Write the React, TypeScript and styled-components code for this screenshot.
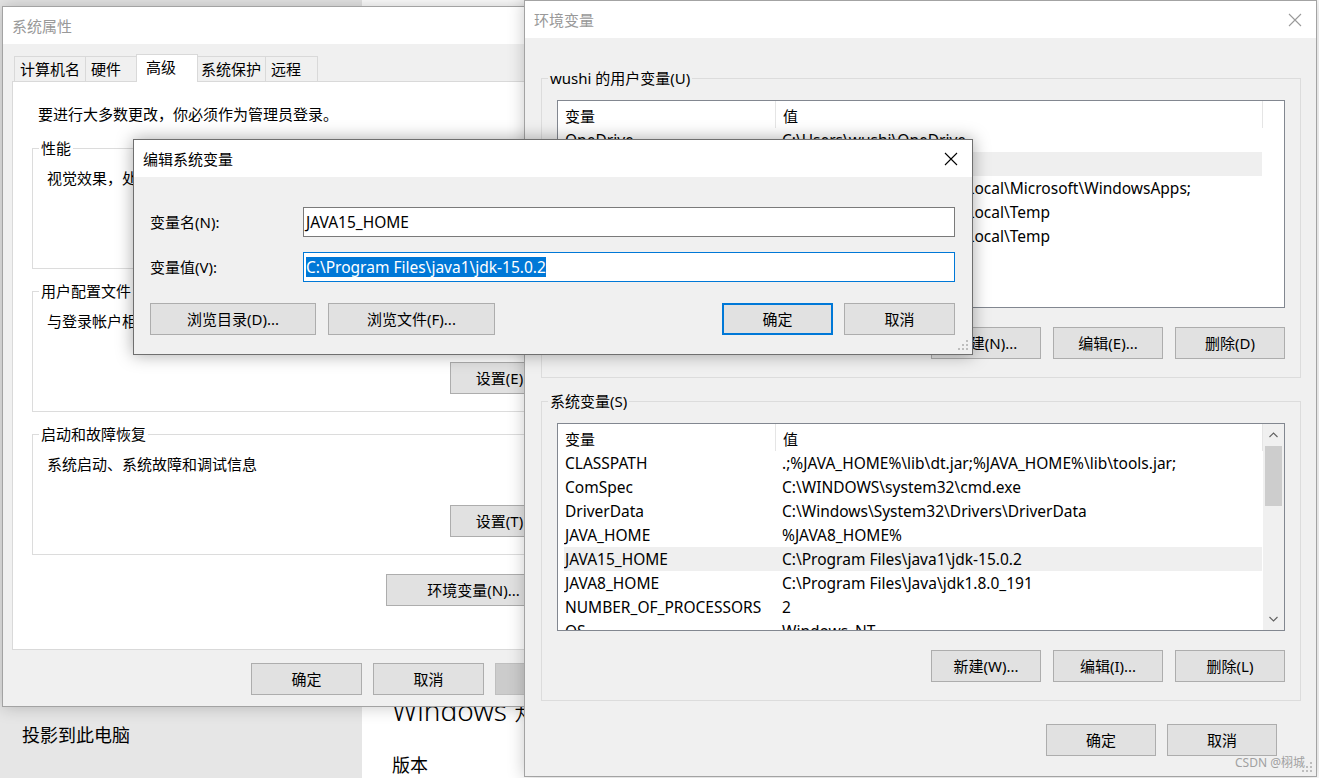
import React from "react";
import styled, { createGlobalStyle, css } from "styled-components";

const GlobalStyle = createGlobalStyle`
  html, body {
    margin: 0;
    padding: 0;
  }
  body {
    font-family: "Noto Sans", "Noto Sans CJK SC", sans-serif;
    font-size: 15px;
    color: #000;
  }
  * {
    box-sizing: border-box;
  }
`;

const Desktop = styled.div`
  position: relative;
  width: 1319px;
  height: 778px;
  overflow: hidden;
  display: flex;
`;

/* settings app behind the dialogs */
const NavPane = styled.aside`
  width: 362px;
  background: #e6e6e6;
  display: flex;
  flex-direction: column;
  justify-content: flex-end;
  padding: 0 0 31px 22px;
`;

const NavItem = styled.div`
  font-size: 18px;
  line-height: 24px;
`;

const ContentPane = styled.main`
  flex: 1;
  background: #fff;
  display: flex;
  flex-direction: column;
  justify-content: flex-end;
  padding: 0 0 1px 30px;
`;

const Heading = styled.h2`
  margin: 0;
  font-size: 28px;
  font-weight: 300;
  line-height: 36px;
`;

const SubLabel = styled.div`
  margin-top: 25px;
  font-size: 18px;
  line-height: 24px;
`;

/* window chrome */
const WindowFrame = styled.section<{
  $x: number;
  $y: number;
  $w: number;
  $h: number;
  $z: number;
  $active?: boolean;
}>`
  position: absolute;
  left: ${(p) => p.$x}px;
  top: ${(p) => p.$y}px;
  width: ${(p) => p.$w}px;
  height: ${(p) => p.$h}px;
  z-index: ${(p) => p.$z};
  display: flex;
  flex-direction: column;
  background: #f0f0f0;
  border: 1px solid ${(p) => (p.$active ? "#6f6f6f" : "#a3a3a3")};
  box-shadow: 0 0 16px rgba(0, 0, 0, ${(p) => (p.$active ? 0.34 : 0.22)});
`;

const TitleBar = styled.header<{ $active?: boolean }>`
  flex: none;
  height: 37px;
  background: #fff;
  display: flex;
  align-items: center;
  justify-content: space-between;
  padding-left: 9px;
  line-height: 20px;
  color: ${(p) => (p.$active ? "#000" : "#999")};
`;

const CloseBox = styled.div`
  width: 42px;
  height: 100%;
  display: flex;
  align-items: center;
  justify-content: center;
`;

const Grip = styled.svg`
  position: absolute;
  right: 3px;
  bottom: 3px;
`;

const Button = styled.button<{ $w: number; $default?: boolean; $off?: boolean }>`
  width: ${(p) => p.$w}px;
  height: 32px;
  padding: 0;
  flex: none;
  font: inherit;
  line-height: 20px;
  color: #000;
  background: #e1e1e1;
  border: 1px solid #adadad;
  ${(p) =>
    p.$default &&
    css`
      border: 2px solid #0078d7;
    `}
  ${(p) =>
    p.$off &&
    css`
      background: #cccccc;
      border-color: #bfbfbf;
      color: #838383;
    `}
`;

const ButtonRow = styled.div<{ $gap: number; $justify?: string; $mt?: number; $pr?: number }>`
  display: flex;
  gap: ${(p) => p.$gap}px;
  justify-content: ${(p) => p.$justify || "flex-end"};
  margin-top: ${(p) => p.$mt || 0}px;
  padding-right: ${(p) => p.$pr || 0}px;
`;

const GroupBox = styled.fieldset<{ $mt?: number }>`
  margin: ${(p) => p.$mt || 0}px 0 0 0;
  padding: 0;
  min-width: 0;
  border: 1px solid #dcdcdc;
`;

const GroupLegend = styled.legend`
  margin-left: 6px;
  padding: 0 2px;
  line-height: 20px;
`;

const GroupBody = styled.div<{ $pad: string }>`
  padding: ${(p) => p.$pad};
  display: flex;
  flex-direction: column;
`;

const Line = styled.div`
  line-height: 20px;
  white-space: nowrap;
`;

/* system properties */
const SysBody = styled.div`
  flex: 1;
  display: flex;
  flex-direction: column;
  padding: 11px 10px 0 9px;
`;

const TabStrip = styled.div`
  display: flex;
  align-items: flex-end;
  height: 26px;
  padding-left: 2px;
`;

const Tab = styled.div<{ $w: number; $active?: boolean }>`
  position: relative;
  width: ${(p) => p.$w}px;
  height: 25px;
  margin-right: -1px;
  padding-left: 5px;
  display: flex;
  align-items: center;
  line-height: 20px;
  background: #f0f0f0;
  border: 1px solid #d9d9d9;
  border-bottom: none;
  ${(p) =>
    p.$active &&
    css`
      width: ${p.$w + 4}px;
      height: 28px;
      margin: 0 -3px -1px -2px;
      padding: 0 0 3px 9px;
      background: #fff;
      z-index: 1;
    `}
`;

const TabPanel = styled.div`
  height: 569px;
  background: #fff;
  border: 1px solid #d9d9d9;
  padding: 0 19px;
  display: flex;
  flex-direction: column;
`;

const Notice = styled.p`
  margin: 22px 0 14px 6px;
  line-height: 20px;
  white-space: nowrap;
`;

/* environment variables */
const EnvBody = styled.div`
  flex: 1;
  display: flex;
  flex-direction: column;
  padding: 30px 15px 0 16px;
`;

const ListBox = styled.div`
  width: 728px;
  height: 208px;
  flex: none;
  display: flex;
  overflow: hidden;
  background: #fff;
  border: 1px solid #828790;
`;

const ListMain = styled.div`
  flex: 1;
  min-width: 0;
  overflow: hidden;
  display: flex;
  flex-direction: column;
`;

const HeaderRow = styled.div`
  flex: none;
  height: 27px;
  display: flex;
`;

const HeaderCell = styled.div<{ $w: number }>`
  width: ${(p) => p.$w}px;
  padding: 1px 0 0 7px;
  display: flex;
  align-items: center;
  border-right: 1px solid #e5e5e5;
`;

const Row = styled.div<{ $selected?: boolean }>`
  flex: none;
  width: 698px;
  height: 24px;
  margin-left: 6px;
  display: flex;
  font-size: 15.5px;
  line-height: 24px;
  white-space: nowrap;
  background: ${(p) => (p.$selected ? "#efefef" : "transparent")};
`;

const NameCell = styled.div`
  width: 212px;
  padding-left: 1px;
  overflow: hidden;
`;

const ValueCell = styled.div`
  flex: 1;
  padding-left: 6px;
  overflow: hidden;
`;

const ScrollBar = styled.div`
  width: 21px;
  flex: none;
  display: flex;
  flex-direction: column;
  background: #f0f0f0;
`;

const ArrowBox = styled.div`
  height: 22px;
  flex: none;
  display: flex;
  align-items: center;
  justify-content: center;
`;

const Thumb = styled.div`
  height: 60px;
  margin: 0 2px;
  background: #cdcdcd;
`;

const Track = styled.div`
  flex: 1;
`;

/* edit dialog */
const DialogBody = styled.div`
  flex: 1;
  display: flex;
  flex-direction: column;
  padding: 30px 17px 0 16px;
`;

const FieldRow = styled.div<{ $mt?: number }>`
  display: flex;
  align-items: center;
  margin-top: ${(p) => p.$mt || 0}px;
`;

const FieldLabel = styled.label`
  width: 153px;
  flex: none;
  line-height: 20px;
`;

const TextBox = styled.div<{ $focused?: boolean }>`
  flex: 1;
  height: 30px;
  display: flex;
  align-items: center;
  padding: 0 2px;
  font-size: 15.5px;
  line-height: 20px;
  background: #fff;
  border: 1px solid ${(p) => (p.$focused ? "#0078d7" : "#7a7a7a")};
`;

const Selection = styled.span`
  background: #0078d7;
  color: #fff;
  line-height: 20px;
`;

const Watermark = styled.div`
  position: absolute;
  right: 14px;
  bottom: 7px;
  z-index: 10;
  font-size: 12px;
  line-height: 16px;
  color: #a0a0a0;
`;

const CloseIcon: React.FC<{ color: string }> = ({ color }) => (
  <svg width="14" height="14" viewBox="0 0 14 14">
    <path d="M1 1 L13 13 M13 1 L1 13" stroke={color} strokeWidth="1.1" fill="none" />
  </svg>
);

const ResizeGrip: React.FC = () => (
  <Grip width="11" height="11" viewBox="0 0 11 11">
    <g fill="#bdbdbd">
      <rect x="8" y="0" width="2" height="2" />
      <rect x="8" y="4" width="2" height="2" />
      <rect x="4" y="4" width="2" height="2" />
      <rect x="8" y="8" width="2" height="2" />
      <rect x="4" y="8" width="2" height="2" />
      <rect x="0" y="8" width="2" height="2" />
    </g>
  </Grip>
);

const Chevron: React.FC<{ up?: boolean }> = ({ up }) => (
  <svg width="9" height="6" viewBox="0 0 9 6">
    <path
      d={up ? "M0.5 5 L4.5 1 L8.5 5" : "M0.5 1 L4.5 5 L8.5 1"}
      stroke="#606060"
      strokeWidth="1.1"
      fill="none"
    />
  </svg>
);

type Pair = [string, string];

const userVars: Pair[] = [
  ["OneDrive", "C:\\Users\\wushi\\OneDrive"],
  ["OneDriveConsumer", "C:\\Users\\wushi\\OneDrive"],
  ["Path", "C:\\Users\\wushi\\AppData\\Local\\Microsoft\\WindowsApps;"],
  ["TEMP", "C:\\Users\\wushi\\AppData\\Local\\Temp"],
  ["TMP", "C:\\Users\\wushi\\AppData\\Local\\Temp"],
];

const sysVars: Pair[] = [
  ["CLASSPATH", ".;%JAVA_HOME%\\lib\\dt.jar;%JAVA_HOME%\\lib\\tools.jar;"],
  ["ComSpec", "C:\\WINDOWS\\system32\\cmd.exe"],
  ["DriverData", "C:\\Windows\\System32\\Drivers\\DriverData"],
  ["JAVA_HOME", "%JAVA8_HOME%"],
  ["JAVA15_HOME", "C:\\Program Files\\java1\\jdk-15.0.2"],
  ["JAVA8_HOME", "C:\\Program Files\\Java\\jdk1.8.0_191"],
  ["NUMBER_OF_PROCESSORS", "2"],
  ["OS", "Windows_NT"],
];

const VarList: React.FC<{ rows: Pair[]; selected: number; scroll?: boolean }> = ({
  rows,
  selected,
  scroll,
}) => (
  <ListBox>
    <ListMain>
      <HeaderRow>
        <HeaderCell $w={218}>变量</HeaderCell>
        <HeaderCell $w={487}>值</HeaderCell>
      </HeaderRow>
      {rows.map((r, i) => (
        <Row key={r[0]} $selected={i === selected}>
          <NameCell>{r[0]}</NameCell>
          <ValueCell>{r[1]}</ValueCell>
        </Row>
      ))}
    </ListMain>
    {scroll && (
      <ScrollBar>
        <ArrowBox>
          <Chevron up />
        </ArrowBox>
        <Thumb />
        <Track />
        <ArrowBox>
          <Chevron />
        </ArrowBox>
      </ScrollBar>
    )}
  </ListBox>
);

const tabs: { label: string; w: number; active?: boolean }[] = [
  { label: "计算机名", w: 72 },
  { label: "硬件", w: 54 },
  { label: "高级", w: 58, active: true },
  { label: "系统保护", w: 71 },
  { label: "远程", w: 53 },
];

const SystemProperties: React.FC = () => (
  <WindowFrame $x={2} $y={6} $w={615} $h={701} $z={1}>
    <TitleBar>系统属性</TitleBar>
    <SysBody>
      <TabStrip>
        {tabs.map((t) => (
          <Tab key={t.label} $w={t.w} $active={t.active}>
            {t.label}
          </Tab>
        ))}
      </TabStrip>
      <TabPanel>
        <Notice>要进行大多数更改，你必须作为管理员登录。</Notice>
        <GroupBox>
          <GroupLegend>性能</GroupLegend>
          <GroupBody $pad="10px 24px 17px 14px">
            <Line>视觉效果，处理器计划，内存使用，以及虚拟内存</Line>
            <ButtonRow $gap={0} $mt={31}>
              <Button $w={111}>设置(S)...</Button>
            </ButtonRow>
          </GroupBody>
        </GroupBox>
        <GroupBox $mt={12}>
          <GroupLegend>用户配置文件</GroupLegend>
          <GroupBody $pad="10px 24px 17px 14px">
            <Line>与登录帐户相关的桌面设置</Line>
            <ButtonRow $gap={0} $mt={31}>
              <Button $w={111}>设置(E)...</Button>
            </ButtonRow>
          </GroupBody>
        </GroupBox>
        <GroupBox $mt={12}>
          <GroupLegend>启动和故障恢复</GroupLegend>
          <GroupBody $pad="10px 24px 17px 14px">
            <Line>系统启动、系统故障和调试信息</Line>
            <ButtonRow $gap={0} $mt={31}>
              <Button $w={111}>设置(T)...</Button>
            </ButtonRow>
          </GroupBody>
        </GroupBox>
        <ButtonRow $gap={0} $mt={19} $pr={25}>
          <Button $w={175}>环境变量(N)...</Button>
        </ButtonRow>
      </TabPanel>
      <ButtonRow $gap={11} $mt={13}>
        <Button $w={111}>确定</Button>
        <Button $w={111}>取消</Button>
        <Button $w={111} $off>
          应用(A)
        </Button>
      </ButtonRow>
    </SysBody>
  </WindowFrame>
);

const EnvironmentVariables: React.FC = () => (
  <WindowFrame $x={524} $y={0} $w={793} $h={777} $z={2}>
    <TitleBar>
      环境变量
      <CloseBox>
        <CloseIcon color="#9a9a9a" />
      </CloseBox>
    </TitleBar>
    <EnvBody>
      <GroupBox>
        <GroupLegend>wushi 的用户变量(U)</GroupLegend>
        <GroupBody $pad="12px 15px 18px 15px">
          <VarList rows={userVars} selected={1} />
          <ButtonRow $gap={12} $mt={19}>
            <Button $w={110}>新建(N)...</Button>
            <Button $w={110}>编辑(E)...</Button>
            <Button $w={110}>删除(D)</Button>
          </ButtonRow>
        </GroupBody>
      </GroupBox>
      <GroupBox $mt={13}>
        <GroupLegend>系统变量(S)</GroupLegend>
        <GroupBody $pad="12px 15px 18px 15px">
          <VarList rows={sysVars} selected={4} scroll />
          <ButtonRow $gap={12} $mt={19}>
            <Button $w={110}>新建(W)...</Button>
            <Button $w={110}>编辑(I)...</Button>
            <Button $w={110}>删除(L)</Button>
          </ButtonRow>
        </GroupBody>
      </GroupBox>
      <ButtonRow $gap={11} $mt={23} $pr={24}>
        <Button $w={110}>确定</Button>
        <Button $w={110}>取消</Button>
      </ButtonRow>
    </EnvBody>
    <ResizeGrip />
  </WindowFrame>
);

const EditDialog: React.FC = () => (
  <WindowFrame $x={133} $y={139} $w={840} $h={216} $z={3} $active>
    <TitleBar $active>
      编辑系统变量
      <CloseBox>
        <CloseIcon color="#000" />
      </CloseBox>
    </TitleBar>
    <DialogBody>
      <FieldRow>
        <FieldLabel>变量名(N):</FieldLabel>
        <TextBox>JAVA15_HOME</TextBox>
      </FieldRow>
      <FieldRow $mt={15}>
        <FieldLabel>变量值(V):</FieldLabel>
        <TextBox $focused>
          <Selection>C:\Program Files\java1\jdk-15.0.2</Selection>
        </TextBox>
      </FieldRow>
      <ButtonRow $gap={0} $mt={21} $justify="space-between">
        <ButtonRow $gap={12}>
          <Button $w={166}>浏览目录(D)...</Button>
          <Button $w={167}>浏览文件(F)...</Button>
        </ButtonRow>
        <ButtonRow $gap={11}>
          <Button $w={111} $default>
            确定
          </Button>
          <Button $w={111}>取消</Button>
        </ButtonRow>
      </ButtonRow>
    </DialogBody>
    <ResizeGrip />
  </WindowFrame>
);

const App: React.FC = () => (
  <>
    <GlobalStyle />
    <Desktop>
      <NavPane>
        <NavItem>投影到此电脑</NavItem>
      </NavPane>
      <ContentPane>
        <Heading>Windows 规格</Heading>
        <SubLabel>版本</SubLabel>
      </ContentPane>
      <SystemProperties />
      <EnvironmentVariables />
      <EditDialog />
      <Watermark>CSDN @栩城</Watermark>
    </Desktop>
  </>
);

export default App;
